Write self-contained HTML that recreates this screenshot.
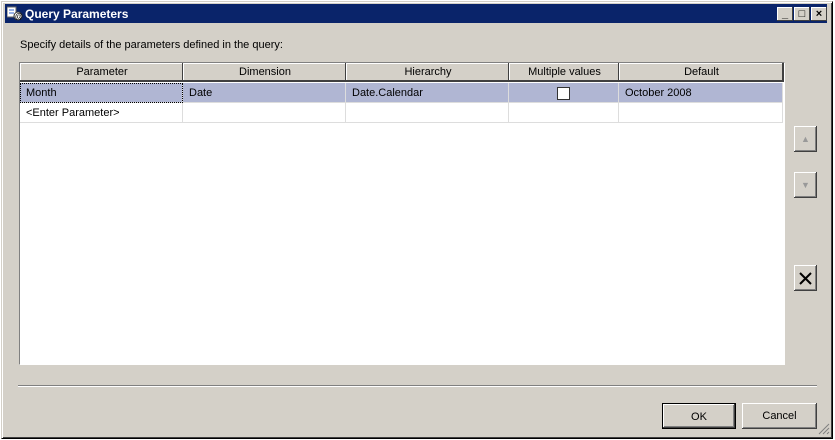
<!DOCTYPE html>
<html><head><style>
body{margin:0;width:835px;height:440px;background:#fff;font-family:"Liberation Sans",sans-serif;font-size:11px;overflow:hidden;position:relative}
.win{position:absolute;left:1px;top:1px;width:830px;height:436px;background:#d4d0c8;border:1px solid #000;border-top-color:#d4d0c8;border-left-color:#d4d0c8;box-shadow:inset 1px 1px 0 #fff,inset -1px -1px 0 #404040}
.title{position:absolute;left:5px;top:4px;width:822px;height:19px;background:#0a246a;color:#fff;font-weight:bold;font-size:12px}
.title span{position:absolute;left:20px;top:3px}
.a{position:absolute}
.tb{position:absolute;top:3px;width:16px;height:14px;background:#d4d0c8;box-shadow:inset -1px -1px 0 #404040,inset 1px 1px 0 #fff;color:#000;font-size:11px;text-align:center;line-height:14px}
.grid{position:absolute;left:19px;top:62px;width:764px;height:301px;background:#fff;border:1px solid #808080;border-right-color:#fff;border-bottom-color:#fff}
.h{position:absolute;top:0;height:19px;background:#d4d0c8;box-shadow:inset -2px -2px 0 #404040,inset 1px 1px 0 #fff;text-align:center;line-height:19px}
.c{position:absolute;height:20px;line-height:20px;padding-left:6px;box-sizing:border-box;border-right:1px solid #ddd;border-bottom:1px solid #ddd}
.sel{background:#b0b6d3}
.btn{position:absolute;background:#d4d0c8;box-shadow:inset -1px -1px 0 #404040,inset 1px 1px 0 #fff,inset -2px -2px 0 #808080;text-align:center}
</style></head><body>
<div class="win"></div>
<div class="title"><svg class="a" style="left:2px;top:2px" width="16" height="15"><rect x="0" y="1" width="9" height="10" fill="#fff" stroke="#666"/><line x1="2" y1="4" x2="7" y2="4" stroke="#36c"/><line x1="2" y1="7" x2="7" y2="7" stroke="#36c"/><circle cx="11" cy="10" r="4" fill="#fff" stroke="#333"/><text x="8" y="13" font-size="8" fill="#000">@</text></svg><span>Query Parameters</span>
<div class="tb" style="left:772px">_</div><div class="tb" style="left:789px">□</div><div class="tb" style="left:806px;font-weight:bold">×</div></div>
<div class="a" style="left:20px;top:39px;color:#000">Specify details of the parameters defined in the query:</div>
<div class="grid">
<div class="h" style="left:0;width:164px">Parameter</div>
<div class="h" style="left:163px;width:164px">Dimension</div>
<div class="h" style="left:326px;width:164px">Hierarchy</div>
<div class="h" style="left:489px;width:111px">Multiple values</div>
<div class="h" style="left:599px;width:165px">Default</div>
<div class="c sel" style="left:0;top:20px;width:163px;outline:1px dotted #000;outline-offset:-1px">Month</div>
<div class="c sel" style="left:163px;top:20px;width:163px">Date</div>
<div class="c sel" style="left:326px;top:20px;width:163px">Date.Calendar</div>
<div class="c sel" style="left:489px;top:20px;width:110px"><div class="a" style="left:48px;top:4px;width:11px;height:11px;background:#fff;border:1px solid #333"></div></div>
<div class="c sel" style="left:599px;top:20px;width:164px">October 2008</div>
<div class="c" style="left:0;top:40px;width:163px">&lt;Enter Parameter&gt;</div>
<div class="c" style="left:163px;top:40px;width:163px"></div>
<div class="c" style="left:326px;top:40px;width:163px"></div>
<div class="c" style="left:489px;top:40px;width:110px"></div>
<div class="c" style="left:599px;top:40px;width:164px"></div>
</div>
<div class="btn" style="left:794px;top:126px;width:23px;height:26px;color:#999;line-height:26px;font-size:9px">▲</div>
<div class="btn" style="left:794px;top:172px;width:23px;height:26px;color:#999;line-height:26px;font-size:9px">▼</div>
<div class="btn" style="left:794px;top:265px;width:23px;height:26px"><svg width="23" height="26"><path d="M6 8L17 19M17 8L6 19" stroke="#000" stroke-width="2"/></svg></div>
<div class="a" style="left:18px;top:385px;width:799px;height:1px;background:#808080;border-bottom:1px solid #fff"></div>
<div class="btn" style="left:662px;top:403px;width:74px;height:26px;line-height:26px;border:1px solid #000;box-sizing:border-box">OK</div>
<div class="btn" style="left:742px;top:403px;width:75px;height:26px;line-height:26px">Cancel</div>
<svg class="a" style="left:818px;top:423px" width="12" height="12"><path d="M11 1L1 11M11 5L5 11M11 9L9 11" stroke="#808080"/></svg>
</body></html>
